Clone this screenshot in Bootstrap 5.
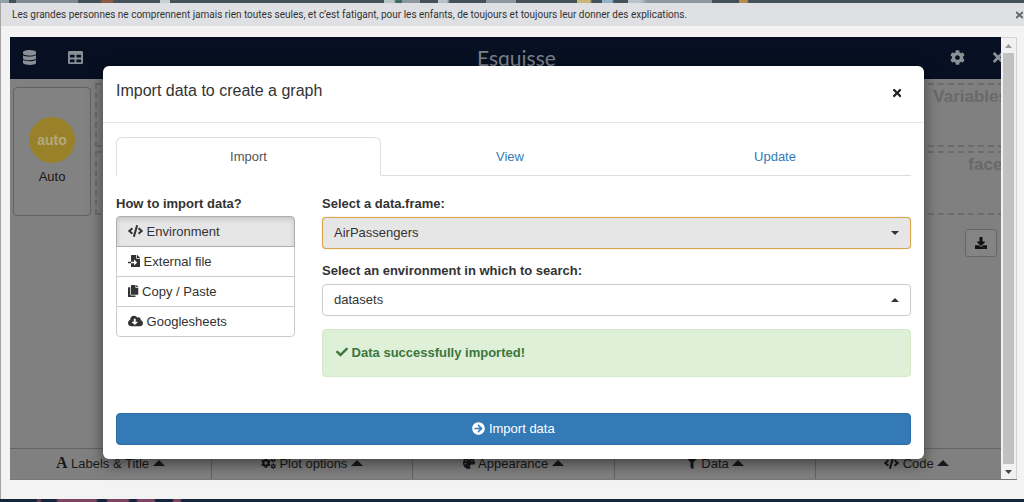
<!DOCTYPE html>
<html lang="fr">
<head>
<meta charset="utf-8">
<meta name="viewport" content="width=device-width, initial-scale=1">
<title>Esquisse</title>
<link href="https://cdn.jsdelivr.net/npm/bootstrap@5.3.0/dist/css/bootstrap.min.css" rel="stylesheet">
<style>
body { font-family: "Liberation Sans", Arial, sans-serif; font-size: 13px; line-height: 20px; color: #333; background: #f3f3f3; }
.fa { height: 12px; width: auto; fill: currentColor; vertical-align: -1px; }
.strip-top { height: 3px; background: linear-gradient(90deg, #8fa3a8 0 9px, #45515a 9px 16px, #7e8a90 16px 78px, #45515a 78px 100px, #8a5d47 102px 112px, #45525a 114px 160px, #c9d0d2 160px 170px, #45515a 170px 384px, #b8c4c6 384px 394px, #3c6b66 396px 402px, #8b979c 402px 420px, #45515a 420px 438px, #b9c3c5 438px 447px, #45515a 450px 486px, #8b979c 486px 516px, #45515a 516px 577px, #c9b779 577px 590px, #45515a 592px 602px, #8fb3cc 602px 612px, #45515a 614px 628px, #b9c3c5 628px 640px, #8b979c 648px 712px, #45515a 712px 739px, #b58e4f 739px 747px, #45515a 749px); }
.strip-bottom { height: 3px; background: linear-gradient(90deg, #14243a 0 36px, #6a3a52 38px 40px, #14243a 42px 56px, #7d4560 58px 96px, #14243a 98px 106px, #7d4560 108px 128px, #14243a 130px 136px, #7d4560 138px 154px, #14243a 156px 172px, #7d4560 174px 180px, #14243a 182px); }
.frame { border-left: 1px solid #a5a5a5; }
.titlebar { height: 23px; padding: 0 1px 0 11px; background: #dfe0e4; color: #333; font-family: Roboto, sans-serif; font-size: 10px; }
.titlebar button { color: #666; font-size: 10px; line-height: 10px; }
.pane { margin: 11px 7px 19px 9px; background: #808080; border: 1px solid #777; border-width: 0 0 1px; }
.app-head { height: 42px; padding: 0 14px 0 13px; background: #061022; color: #8b9097; font-size: 14px; }
.app-head button { line-height: 14px; }
.app-head .fa { height: 15px; }
.brand { font-family: Lato, sans-serif; font-weight: 400; font-size: 21px; color: #7b8088; }
.charts { padding: 4px 3px; }
.chart-btn { width: 78px; height: 129px; border: 1px solid #626262; border-radius: 4px; color: #191919; background: #828282; }
.round { width: 46px; height: 46px; background: #99812a; color: #b3a97c; font-size: 14px; font-weight: 700; }
.zone { height: 64px; border: 2px dashed #6c6c6c; color: #696969; font-size: 17px; font-weight: 700; line-height: 24px; }
.dl-row { padding: 13px 17px 0 0; }
.dl { width: 32px; height: 28px; border: 1px solid #666; border-radius: 3px; color: #111; background: #848484; line-height: 12px; }
.foot { height: 31px; border-top: 1px solid #636363; }
.foot button { color: #191919; border-right: 1px solid #636363; }
.foot button:last-child { border-right: 0; }
.letter { font-family: "Liberation Serif", serif; font-size: 16px; line-height: 16px; }
.up { width: 12px; height: 6px; fill: currentColor; vertical-align: 2px; }
.rail { width: 16px; background: #f1f1f1; border: 1px solid #d2d2d2; border-width: 1px 1px 0 0; }
.rail span { margin: 0 2px; background: #c1c1c1; }
.rail svg { height: 15px; }
.dialog { top: 29px; left: 93px; right: 93px; border-radius: 6px; box-shadow: 0 5px 15px rgba(0,0,0,.5); }
.dialog-head { height: 57px; padding: 0 13px; border-bottom: 1px solid #e5e5e5; }
.dialog-head h1 { font-size: 16px; line-height: 20px; padding-top: 15px; font-weight: 400; }
.dialog-head button { padding: 21px 10px 0; line-height: 14px; color: #222; }
.dialog-main { padding: 14px 13px; }
.nav-tabs { --bs-nav-tabs-border-color: #ddd; --bs-nav-tabs-link-active-color: #555; --bs-nav-link-color: #337ab7; --bs-nav-link-hover-color: #23527c; --bs-nav-tabs-link-active-border-color: #ddd #ddd #fff; }
.nav-tabs .nav-link { padding: 9px 15px 8px; }
.nav-tabs .nav-link:not(.active) { padding-right: 22px; }
.fields { display: grid; grid-template-columns: 179px 1fr; column-gap: 27px; padding-top: 18px; }
.caption { font-weight: 700; line-height: 20px; margin-bottom: 3px; }
.choice { --bs-btn-color: #333; --bs-btn-border-color: #ccc; --bs-btn-bg: #fff; --bs-btn-active-bg: #e6e6e6; --bs-btn-active-color: #333; --bs-btn-active-border-color: #adadad; --bs-btn-hover-bg: #f2f2f2; --bs-btn-hover-color: #333; --bs-btn-border-radius: 4px; font-size: 13px; line-height: 20px; padding: 5px 11px 4px; text-align: left; }
.btn-check:checked + .choice { box-shadow: inset 0 3px 5px rgba(0,0,0,.125); }
.picker { height: 32px; padding: 4px 11px; border: 1px solid #ccc; border-radius: 4px; font-size: 13px; line-height: 20px; color: #333; background-size: 8px 4px; background-position: right 11px center; background-image: url("data:image/svg+xml,%3Csvg xmlns='http://www.w3.org/2000/svg' viewBox='0 0 8 4'%3E%3Cpath d='M0 4h8L4 0z' fill='%23333'/%3E%3C/svg%3E"); }
.picker-on { background-color: #e6e6e6; border-color: #d9a44c; box-shadow: 0 0 1px 0 #e0a040; margin-bottom: 12px; background-image: url("data:image/svg+xml,%3Csvg xmlns='http://www.w3.org/2000/svg' viewBox='0 0 8 4'%3E%3Cpath d='M0 0h8L4 4z' fill='%23333'/%3E%3C/svg%3E"); }
.notice { margin-top: 13px; padding: 13px; border: 1px solid #d6e9c6; border-radius: 4px; background: #dff0d8; color: #3c763d; font-weight: 700; }
.go { --bs-btn-bg: #337ab7; --bs-btn-border-color: #2e6da4; --bs-btn-hover-bg: #286090; font-size: 13px; line-height: 20px; padding: 5px; border-radius: 4px; margin-top: 36px; }
.go .fa { height: 13px; vertical-align: -2px; }
</style>
</head>
<body>
<svg class="d-none" aria-hidden="true">
  <symbol id="database" viewBox="0 0 448 512"><path d="M448 73.143v45.714C448 159.143 347.667 192 224 192S0 159.143 0 118.857V73.143C0 32.857 100.333 0 224 0s224 32.857 224 73.143zM448 176v102.857C448 319.143 347.667 352 224 352S0 319.143 0 278.857V176c48.125 33.143 136.208 48.572 224 48.572S399.874 209.143 448 176zm0 160v102.857C448 479.143 347.667 512 224 512S0 479.143 0 438.857V336c48.125 33.143 136.208 48.572 224 48.572S399.874 369.143 448 336z"/></symbol>
  <symbol id="grid" viewBox="0 0 512 512"><path d="M464 32H48C21.49 32 0 53.49 0 80v352c0 26.51 21.49 48 48 48h416c26.51 0 48-21.49 48-48V80c0-26.51-21.49-48-48-48zM224 416H64v-96h160v96zm0-160H64v-96h160v96zm224 160H288v-96h160v96zm0-160H288v-96h160v96z"/></symbol>
  <symbol id="times" viewBox="0 0 352 512"><path d="M242.72 256l100.07-100.07c12.28-12.28 12.28-32.19 0-44.48l-22.24-22.24c-12.28-12.28-32.19-12.28-44.48 0L176 189.28 75.93 89.21c-12.28-12.28-32.19-12.28-44.48 0L9.21 111.45c-12.28 12.28-12.28 32.19 0 44.48L109.28 256 9.21 356.07c-12.28 12.28-12.28 32.19 0 44.48l22.24 22.24c12.28 12.28 32.2 12.28 44.48 0L176 322.72l100.07 100.07c12.28 12.28 32.2 12.28 44.48 0l22.24-22.24c12.28-12.28 12.28-32.19 0-44.48L242.72 256z"/></symbol>
  <symbol id="cog" viewBox="0 0 512 512"><path id="cogshape" d="M487.4 315.7l-42.6-24.6c4.3-23.2 4.3-47 0-70.2l42.6-24.6c4.9-2.8 7.1-8.6 5.5-14-11.1-35.6-30-67.8-54.7-94.6-3.8-4.1-10-5.1-14.8-2.3L380.8 110c-17.9-15.4-38.5-27.3-60.8-35.1V25.8c0-5.6-3.9-10.5-9.4-11.7-36.7-8.2-74.3-7.8-109.2 0-5.5 1.2-9.4 6.1-9.4 11.7V75c-22.2 7.9-42.8 19.8-60.8 35.1L88.7 85.5c-4.9-2.8-11-1.9-14.8 2.3-24.7 26.7-43.6 58.9-54.7 94.6-1.7 5.4.6 11.2 5.5 14L67.3 221c-4.3 23.2-4.3 47 0 70.2l-42.6 24.6c-4.9 2.8-7.1 8.6-5.5 14 11.1 35.6 30 67.8 54.7 94.6 3.8 4.1 10 5.1 14.8 2.3l42.6-24.6c17.9 15.4 38.5 27.3 60.8 35.1v49.2c0 5.6 3.9 10.5 9.4 11.7 36.7 8.2 74.3 7.8 109.2 0 5.5-1.2 9.4-6.1 9.4-11.7v-49.2c22.2-7.9 42.8-19.8 60.8-35.1l42.6 24.6c4.9 2.8 11 1.9 14.8-2.3 24.7-26.7 43.6-58.9 54.7-94.6 1.5-5.5-.7-11.3-5.6-14.1zM256 336c-44.1 0-80-35.9-80-80s35.9-80 80-80 80 35.9 80 80-35.9 80-80 80z"/></symbol>
  <symbol id="cogs" viewBox="0 0 640 512"><use href="#cogshape" transform="translate(0 50) scale(.82)"/><use href="#cogshape" transform="translate(405 0) scale(.46)"/><use href="#cogshape" transform="translate(405 275) scale(.46)"/></symbol>
  <symbol id="code" viewBox="0 0 640 512"><path d="M278.9 511.5l-61-17.7c-6.4-1.8-10-8.5-8.2-14.9L346.2 8.7c1.8-6.4 8.5-10 14.9-8.2l61 17.7c6.4 1.8 10 8.5 8.2 14.9L293.8 503.3c-1.9 6.4-8.5 10.1-14.9 8.2zm-114-112.2l43.5-46.4c4.6-4.9 4.3-12.7-.8-17.2L117 256l90.6-79.7c5.1-4.5 5.5-12.3.8-17.2l-43.5-46.4c-4.5-4.8-12.1-5.1-17-.5L3.8 247.2c-5.1 4.7-5.1 12.8 0 17.5l144.1 135.1c4.9 4.6 12.5 4.4 17-.5zm327.2.6l144.1-135.1c5.1-4.7 5.1-12.8 0-17.5L492.1 112.1c-4.8-4.5-12.4-4.3-17 .5L431.6 159c-4.6 4.9-4.3 12.7.8 17.2L523 256l-90.6 79.7c-5.1 4.5-5.5 12.3-.8 17.2l43.5 46.4c4.5 4.9 12.1 5.1 17 .6z"/></symbol>
  <symbol id="file-import" viewBox="0 0 512 512"><path d="M16 288c-8.8 0-16 7.2-16 16v32c0 8.8 7.2 16 16 16h112v-64zm489-183L407.1 7c-4.5-4.5-10.6-7-17-7H384v128h128v-6.1c0-6.3-2.5-12.4-7-16.9zm-153 31V0H152c-13.3 0-24 10.7-24 24v264h128v-65.2c0-14.3 17.3-21.4 27.4-11.3L379 308c6.6 6.7 6.6 17.4 0 24l-95.7 96.4c-10.1 10.1-27.4 3-27.4-11.3V352H128v136c0 13.3 10.7 24 24 24h336c13.3 0 24-10.7 24-24V160H376c-13.2 0-24-10.8-24-24z"/></symbol>
  <symbol id="copy" viewBox="0 0 448 512"><path d="M320 448v40c0 13.255-10.745 24-24 24H24c-13.255 0-24-10.745-24-24V120c0-13.255 10.745-24 24-24h72v296c0 30.879 25.121 56 56 56h168zm0-344V0H152c-13.255 0-24 10.745-24 24v368c0 13.255 10.745 24 24 24h272c13.255 0 24-10.745 24-24V128H344c-13.2 0-24-10.8-24-24zm120.971-31.029L375.029 7.029A24 24 0 0 0 358.059 0H352v96h96v-6.059a24 24 0 0 0-7.029-16.97z"/></symbol>
  <symbol id="cloud" viewBox="0 0 640 512"><path d="M537.6 226.6c4.1-10.7 6.4-22.4 6.4-34.6 0-53-43-96-96-96-19.7 0-38.1 6-53.3 16.2C367 64.2 315.3 32 256 32c-88.4 0-160 71.6-160 160 0 2.7.1 5.4.2 8.1C40.2 219.8 0 273.2 0 336c0 79.5 64.5 144 144 144h368c70.7 0 128-57.3 128-128 0-61.9-44-113.6-102.4-125.4zm-132.9 88.7L299.3 420.7c-6.2 6.2-16.4 6.2-22.6 0L171.3 315.3c-10.1-10.1-2.9-27.3 11.3-27.3H248V176c0-8.8 7.2-16 16-16h48c8.8 0 16 7.2 16 16v112h65.4c14.2 0 21.4 17.2 11.3 27.3z"/></symbol>
  <symbol id="check" viewBox="0 0 512 512"><path d="M173.898 439.404l-166.4-166.4c-9.997-9.997-9.997-26.206 0-36.204l36.203-36.204c9.997-9.998 26.207-9.998 36.204 0L192 312.69 432.095 72.596c9.997-9.997 26.207-9.997 36.204 0l36.203 36.204c9.997 9.997 9.997 26.206 0 36.204l-294.4 294.401c-9.998 9.997-26.207 9.997-36.204-.001z"/></symbol>
  <symbol id="arrow-circle" viewBox="0 0 512 512"><path d="M256 8c137 0 248 111 248 248S393 504 256 504 8 393 8 256 119 8 256 8zm-28.9 143.6l75.5 72.4H120c-13.3 0-24 10.7-24 24v16c0 13.3 10.7 24 24 24h182.6l-75.5 72.4c-9.7 9.3-9.9 24.8-.4 34.3l11 10.9c9.4 9.4 24.6 9.4 33.9 0L404.3 273c9.4-9.4 9.4-24.6 0-33.9L271.6 106.3c-9.4-9.4-24.6-9.4-33.9 0l-11 10.9c-9.5 9.6-9.3 25.1.4 34.4z"/></symbol>
  <symbol id="palette" viewBox="0 0 512 512"><path d="M204.3 5C104.9 24.4 24.8 104.3 5.2 203.4c-37 187 131.7 326.4 258.8 306.7 41.2-6.4 61.4-54.6 42.5-91.7-23.1-45.4 9.9-98.4 60.9-98.4h79.7c35.8 0 64.8-29.6 64.9-65.3C511.5 97.1 368.1-26.9 204.3 5zM96 320c-17.7 0-32-14.3-32-32s14.3-32 32-32 32 14.3 32 32-14.3 32-32 32zm32-128c-17.7 0-32-14.3-32-32s14.3-32 32-32 32 14.3 32 32-14.3 32-32 32zm128-64c-17.7 0-32-14.3-32-32s14.3-32 32-32 32 14.3 32 32-14.3 32-32 32zm128 64c-17.7 0-32-14.3-32-32s14.3-32 32-32 32 14.3 32 32-14.3 32-32 32z"/></symbol>
  <symbol id="filter" viewBox="0 0 512 512"><path d="M487.976 0H24.028C2.71 0-8.047 25.866 7.058 40.971L192 225.941V432c0 7.831 3.821 15.17 10.237 19.662l80 55.98C298.02 518.69 320 507.493 320 487.98V225.941l184.947-184.97C520.021 25.896 509.338 0 487.976 0z"/></symbol>
  <symbol id="download" viewBox="0 0 512 512"><path d="M216 0h80c13.3 0 24 10.7 24 24v168h87.7c17.8 0 26.7 21.5 14.1 34.1L269.7 378.3c-7.5 7.5-19.8 7.5-27.3 0L90.1 226.1c-12.6-12.6-3.7-34.1 14.1-34.1H192V24c0-13.3 10.7-24 24-24zm296 376v112c0 13.3-10.7 24-24 24H24c-13.3 0-24-10.7-24-24V376c0-13.3 10.7-24 24-24h146.7l49 49c20.1 20.1 52.5 20.1 72.6 0l49-49H488c13.3 0 24 10.7 24 24zm-124 88c0-11-9-20-20-20s-20 9-20 20 9 20 20 20 20-9 20-20zm64 0c0-11-9-20-20-20s-20 9-20 20 9 20 20 20 20-9 20-20z"/></symbol>
  <symbol id="up" viewBox="0 0 12 6"><path d="M0 6h12L6 0z"/></symbol>
</svg>

<div class="d-flex flex-column min-vh-100">
  <div class="strip-top"></div>
  <div class="frame flex-grow-1 d-flex flex-column">
    <header class="titlebar d-flex align-items-center justify-content-between">
      <span>Les grandes personnes ne comprennent jamais rien toutes seules, et c’est fatigant, pour les enfants, de toujours et toujours leur donner des explications.</span>
      <button class="border-0 bg-transparent p-0" aria-label="Fermer"><svg width="7" height="8" viewBox="0 0 7 8"><path d="M0 1l7 6M7 1L0 7" stroke="currentColor" stroke-width="2"/></svg></button>
    </header>

    <div class="pane flex-grow-1 d-flex flex-column position-relative">
      <div class="app-head d-flex align-items-center justify-content-between">
        <div class="d-flex gap-4">
          <button class="border-0 bg-transparent p-0 text-reset me-1" aria-label="Data"><svg class="fa" viewBox="0 0 448 512"><use href="#database"/></svg></button>
          <button class="border-0 bg-transparent p-0 text-reset ms-1" aria-label="Table"><svg class="fa" viewBox="0 0 512 512"><use href="#grid"/></svg></button>
        </div>
        <div class="brand">Esquisse</div>
        <div class="d-flex gap-4">
          <button class="border-0 bg-transparent p-0 text-reset me-1" aria-label="Settings"><svg class="fa" viewBox="0 0 512 512"><use href="#cog"/></svg></button>
          <button class="border-0 bg-transparent p-0 text-reset" aria-label="Close"><svg class="fa" viewBox="0 0 352 512"><use href="#times"/></svg></button>
        </div>
      </div>

      <div class="charts flex-grow-1">
        <div class="d-flex gap-1">
          <button class="chart-btn flex-shrink-0 p-0 mt-1 d-flex flex-column align-items-center justify-content-center">
            <span class="round rounded-circle d-flex align-items-center justify-content-center mb-1">auto</span>Auto
          </button>
          <div class="flex-grow-1 d-flex flex-column gap-1 text-end">
            <div class="zone pe-1">Variables</div>
            <div class="zone pe-1">facet</div>
          </div>
        </div>
        <div class="dl-row d-flex justify-content-end">
          <button class="dl p-0" aria-label="Download"><svg class="fa" viewBox="0 0 512 512"><use href="#download"/></svg></button>
        </div>
      </div>

      <div class="foot d-flex">
        <button class="col border-top-0 border-bottom-0 border-start-0 bg-transparent p-0"><b class="letter">A</b> Labels &amp; Title <svg class="up"><use href="#up"/></svg></button>
        <button class="col border-top-0 border-bottom-0 border-start-0 bg-transparent p-0"><svg class="fa" viewBox="0 0 640 512"><use href="#cogs"/></svg> Plot options <svg class="up"><use href="#up"/></svg></button>
        <button class="col border-top-0 border-bottom-0 border-start-0 bg-transparent p-0"><svg class="fa" viewBox="0 0 512 512"><use href="#palette"/></svg> Appearance <svg class="up"><use href="#up"/></svg></button>
        <button class="col border-top-0 border-bottom-0 border-start-0 bg-transparent p-0"><svg class="fa" viewBox="0 0 512 512"><use href="#filter"/></svg> Data <svg class="up"><use href="#up"/></svg></button>
        <button class="col border-top-0 border-bottom-0 border-start-0 bg-transparent p-0"><svg class="fa" viewBox="0 0 640 512"><use href="#code"/></svg> Code <svg class="up"><use href="#up"/></svg></button>
      </div>

      <div class="rail position-absolute top-0 end-0 bottom-0 d-flex flex-column">
        <svg viewBox="0 0 15 15"><path d="M4 10h7L7.500 6z" fill="#999"/></svg>
        <span class="flex-grow-1"></span>
        <svg viewBox="0 0 15 15"><path d="M4 6h7l-3.500 4z" fill="#444"/></svg>
      </div>

      <section class="dialog position-absolute bg-white" role="dialog" aria-labelledby="dialog-title">
        <div class="dialog-head d-flex justify-content-between align-items-start">
          <h1 id="dialog-title" class="m-0">Import data to create a graph</h1>
          <button class="border-0 bg-transparent" aria-label="Close"><svg class="fa" viewBox="0 0 352 512"><use href="#times"/></svg></button>
        </div>
        <div class="dialog-main">
          <ul class="nav nav-tabs nav-justified">
            <li class="nav-item"><a class="nav-link active" href="#import">Import</a></li>
            <li class="nav-item"><a class="nav-link" href="#view">View</a></li>
            <li class="nav-item"><a class="nav-link" href="#update">Update</a></li>
          </ul>
          <div class="fields" id="import">
            <div role="radiogroup" aria-labelledby="how">
              <div class="caption" id="how">How to import data?</div>
              <div class="btn-group-vertical w-100">
                <input type="radio" class="btn-check" name="source" id="s1" checked><label class="btn choice" for="s1"><svg class="fa" viewBox="0 0 640 512"><use href="#code"/></svg> Environment</label>
                <input type="radio" class="btn-check" name="source" id="s2"><label class="btn choice" for="s2"><svg class="fa" viewBox="0 0 512 512"><use href="#file-import"/></svg> External file</label>
                <input type="radio" class="btn-check" name="source" id="s3"><label class="btn choice" for="s3"><svg class="fa" viewBox="0 0 448 512"><use href="#copy"/></svg> Copy / Paste</label>
                <input type="radio" class="btn-check" name="source" id="s4"><label class="btn choice" for="s4"><svg class="fa" viewBox="0 0 640 512"><use href="#cloud"/></svg> Googlesheets</label>
              </div>
            </div>
            <div>
              <label class="caption d-block" for="frame">Select a data.frame:</label>
              <select class="form-select picker picker-on" id="frame"><option>AirPassengers</option></select>
              <label class="caption d-block" for="env">Select an environment in which to search:</label>
              <select class="form-select picker" id="env"><option>datasets</option></select>
              <div class="notice" role="status"><svg class="fa" viewBox="0 0 512 512"><use href="#check"/></svg> Data successfully imported!</div>
            </div>
          </div>
          <button class="btn btn-primary go w-100"><svg class="fa" viewBox="0 0 512 512"><use href="#arrow-circle"/></svg> Import data</button>
        </div>
      </section>
    </div>
  </div>
  <div class="strip-bottom"></div>
</div>
<script src="https://cdn.jsdelivr.net/npm/bootstrap@5.3.0/dist/js/bootstrap.bundle.min.js"></script>
</body>
</html>
